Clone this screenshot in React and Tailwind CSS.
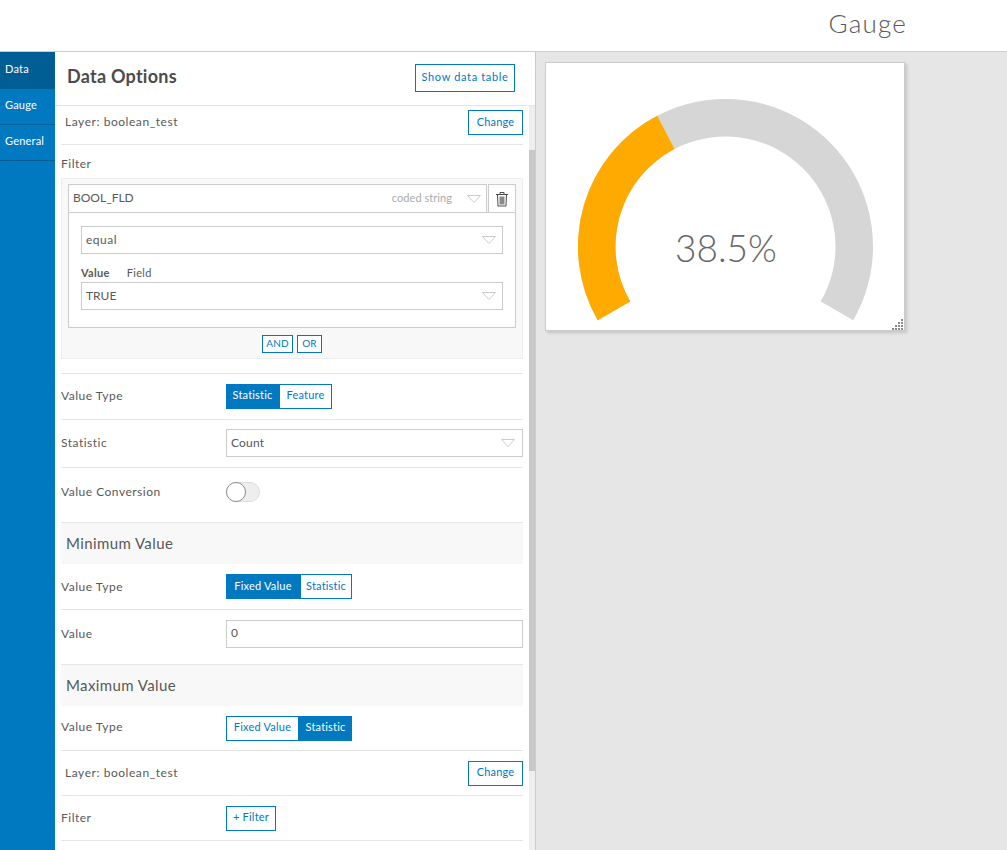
import React from 'react';

const polar = (r, deg) => {
    const a = (deg * Math.PI) / 180;
    return [725.5 - 545 + r * Math.cos(a), 246.5 - 62 + r * Math.sin(a)];
};

// sector of the gauge ring between two angles
const arco = (ini, fin, R = 147.5, r = 110) => {
    const [x1, y1] = polar(R, ini);
    const [x2, y2] = polar(R, fin);
    const [x3, y3] = polar(r, fin);
    const [x4, y4] = polar(r, ini);
    const big = fin - ini > 180 ? 1 : 0;
    return `M${x1} ${y1}A${R} ${R} 0 ${big} 1 ${x2} ${y2}L${x3} ${y3}A${r} ${r} 0 ${big} 0 ${x4} ${y4}Z`;
};

const Caret = () => (
    <svg width="14" height="8" viewBox="0 0 14 8" className="shrink-0">
        <path d="M0.5 0.5H13.5L7 7.5Z" fill="#fff" stroke="#ccc" />
    </svg>
);

const Select = ({ label, className = '', texto = '' }) => (
    <div className={`h-[28px] border border-[#ccc] bg-white flex items-center pl-[4px] pr-[6px] ${className}`}>
        <span className={`flex-1 ${texto}`}>{label}</span>
        <Caret />
    </div>
);

const Btn = ({ children, className = '' }) => (
    <button className={`border border-[#0079c1] text-[#0079c1] bg-white flex items-center justify-center text-[11px] tracking-[0.2px] pb-[1px] ${className}`}>
        {children}
    </button>
);

const Toggle = ({ a, b, activo, wa, wb, pb = 'pb-[2px]' }) => (
    <div className="flex h-[25px] text-[11px] tracking-[0.2px]">
        <div className={`flex items-center justify-center ${pb} border border-[#0079c1] ${wa} ${activo === 0 ? 'bg-[#0079c1] text-white' : 'bg-white text-[#0079c1]'}`}>{a}</div>
        <div className={`flex items-center justify-center ${pb} border border-[#0079c1] ${wb} ${activo === 1 ? 'bg-[#0079c1] text-white' : 'bg-white text-[#0079c1]'}`}>{b}</div>
    </div>
);

const Row = ({ label, h, pb = 'pb-[2px]', children }) => (
    <div className={`flex items-center border-b border-[#e5e5e5] ${h}`}>
        <span className={`w-[165px] shrink-0 tracking-[0.5px] ${pb}`}>{label}</span>
        {children}
    </div>
);

const Seccion = ({ children, h }) => (
    <div className={`${h} bg-[#f8f8f8] flex items-center pl-[5px] text-[15px] tracking-[0.4px] text-[#595959]`}>{children}</div>
);

const Capa = ({ h }) => (
    <div className={`flex items-center justify-between border-b border-[#e5e5e5] pl-[4px] ${h}`}>
        <span className="tracking-[0.55px] pb-[1px]">Layer: boolean_test</span>
        <Btn className="w-[55px] h-[25px]">Change</Btn>
    </div>
);

export default function App() {
    return (
        <div className="w-[1007px] h-[850px] overflow-hidden flex flex-col bg-[#e6e6e6] text-[12px] text-[#595959] font-['Lato','Liberation_Sans',sans-serif]">
            <header className="h-[52px] shrink-0 bg-white border-b border-[#ccc] flex items-center justify-end pr-[100px]">
                <span className="text-[26px] font-light text-[#595959] tracking-[1.2px] pb-[4px]">Gauge</span>
            </header>
            <div className="flex flex-1 min-h-0">
                <nav className="w-[55px] shrink-0 bg-[#0079c1] text-white text-[11px] tracking-[0.2px]">
                    <div className="h-[37px] bg-[#005e95] pl-[5px] pt-[9px]">Data</div>
                    <div className="h-[36px] border-b border-[#005e95] pl-[5px] pt-[8px]">Gauge</div>
                    <div className="h-[36px] border-b border-[#005e95] pl-[5px] pt-[8px]">General</div>
                </nav>
                <section className="w-[481px] shrink-0 bg-white border-r border-[#ccc] flex flex-col">
                    <div className="h-[54px] shrink-0 border-b border-[#e5e5e5] flex items-center justify-between pl-[12px] pr-[20px]">
                        <h2 className="text-[18px] font-bold text-[#4c4c4c] tracking-[0.25px] -mt-[4px]">Data Options</h2>
                        <Btn className="w-[100px] h-[28px] -mt-[2px] !tracking-[0.65px]">Show data table</Btn>
                    </div>
                    <div className="flex flex-1 min-h-0">
                        <div className="w-[474px] overflow-hidden pl-[6px] pr-[6px]">
                            <Capa h="h-[39px] pb-[5px]" />
                            <div className="h-[33px] flex items-end pb-[5px] tracking-[0.5px]">Filter</div>
                            <div className="h-[181px] bg-[#f8f8f8] border border-[#eee] px-[6px] pt-[5px]">
                                <div className="flex h-[29px]">
                                    <div className="w-[419px] border border-[#ccc] bg-white flex items-center pl-[4px] pr-[5px]">
                                        <span className="flex-1 pb-[2px]">BOOL_FLD</span>
                                        <span className="text-[11px] text-[#aaa] mr-[15px] pb-[1px] tracking-[0.05px]">coded string</span>
                                        <Caret />
                                    </div>
                                    <div className="w-[28px] ml-[1px] border border-[#ccc] bg-white flex items-center justify-center">
                                        <svg width="14" height="16" viewBox="0 0 14 16" fill="none" stroke="#4c4c4c">
                                            <path d="M1 3.5H13M5 3.5V1.5H9V3.5M2.5 3.5L3 15H11L11.5 3.5" />
                                            <path d="M4.5 5.5H9.5V13.5H4.5Z" fill="#8a8a8a" stroke="none" />
                                        </svg>
                                    </div>
                                </div>
                                <div className="h-[116px] -mt-[1px] border border-[#ccc] bg-white px-[12px] pt-[13px]">
                                    <Select label="equal" texto="tracking-[0.5px]" />
                                    <div className="h-[28px] flex items-end pb-[1px] gap-[17px] text-[11px] tracking-[0.3px]">
                                        <span className="font-bold">Value</span>
                                        <span>Field</span>
                                    </div>
                                    <Select label="TRUE" />
                                </div>
                                <div className="flex justify-center gap-[4px] mt-[7px]">
                                    <Btn className="w-[31px] h-[18px] !text-[10px]">AND</Btn>
                                    <Btn className="w-[25px] h-[18px] !text-[10px]">OR</Btn>
                                </div>
                            </div>
                            <div className="h-[15px] border-b border-[#e5e5e5]" />
                            <Row label="Value Type" h="h-[46px]">
                                <Toggle a="Statistic" b="Feature" activo={0} wa="w-[53px]" wb="w-[53px]" />
                            </Row>
                            <Row label="Statistic" h="h-[48px] pb-[2px]" pb="">
                                <Select label="Count" className="flex-1 !pr-[7px]" texto="tracking-[0.2px]" />
                            </Row>
                            <Row label="Value Conversion" h="h-[55px]" pb="pb-[6px]">
                                <div className="w-[34px] h-[20px] rounded-full border border-[#ddd] bg-[#eee] relative -mt-[6px]">
                                    <div className="absolute -left-px -top-px w-[20px] h-[20px] rounded-full bg-white border border-[#8a8a8a]" />
                                </div>
                            </Row>
                            <Seccion h="h-[41px]">Minimum Value</Seccion>
                            <Row label="Value Type" h="h-[46px]" pb="">
                                <Toggle a="Fixed Value" b="Statistic" activo={0} wa="w-[74px]" wb="w-[52px]" pb="" />
                            </Row>
                            <div className="flex items-center h-[55px] border-b border-[#e5e5e5] pb-[7px]">
                                <span className="w-[165px] shrink-0 tracking-[0.5px]">Value</span>
                                <div className="flex-1 h-[28px] border border-[#ccc] flex items-center pl-[4px] pb-[2px]">0</div>
                            </div>
                            <Seccion h="h-[41px]">Maximum Value</Seccion>
                            <Row label="Value Type" h="h-[45px]">
                                <Toggle a="Fixed Value" b="Statistic" activo={1} wa="w-[73px]" wb="w-[53px]" />
                            </Row>
                            <Capa h="h-[45px]" />
                            <Row label="Filter" h="h-[45px]" pb="">
                                <Btn className="w-[50px] h-[25px]">+ Filter</Btn>
                            </Row>
                        </div>
                        <div className="w-[6px] flex flex-col bg-[#eee]">
                            <div className="h-[44px]" />
                            <div className="h-[621px] bg-[#c8c8c8]" />
                        </div>
                    </div>
                </section>
                <main className="flex-1 pl-[9px] pt-[10px]">
                    <div className="relative w-[360px] h-[269px] bg-white border border-[#ccc] shadow-[2px_2px_3px_rgba(0,0,0,0.15)]">
                        <svg width="360" height="269" className="absolute -left-px -top-px">
                            <path d={arco(150, 390)} fill="#d6d6d6" />
                            <path d={arco(150, 242.4)} fill="#ffaa00" />
                        </svg>
                        <span className="absolute left-[129px] top-[160px] text-[37px] leading-[50px] font-light text-[#666]">38.5%</span>
                        <svg width="12" height="12" viewBox="0 0 12 12" className="absolute right-0 bottom-0" fill="#8a8a8a">
                            <rect x="9" y="1" width="2" height="2" />
                            <rect x="6" y="4" width="2" height="2" />
                            <rect x="9" y="4" width="2" height="2" />
                            <rect x="3" y="7" width="2" height="2" />
                            <rect x="6" y="7" width="2" height="2" />
                            <rect x="9" y="7" width="2" height="2" />
                            <rect x="0" y="10" width="2" height="2" />
                            <rect x="3" y="10" width="2" height="2" />
                            <rect x="6" y="10" width="2" height="2" />
                            <rect x="9" y="10" width="2" height="2" />
                        </svg>
                    </div>
                </main>
            </div>
        </div>
    );
}
